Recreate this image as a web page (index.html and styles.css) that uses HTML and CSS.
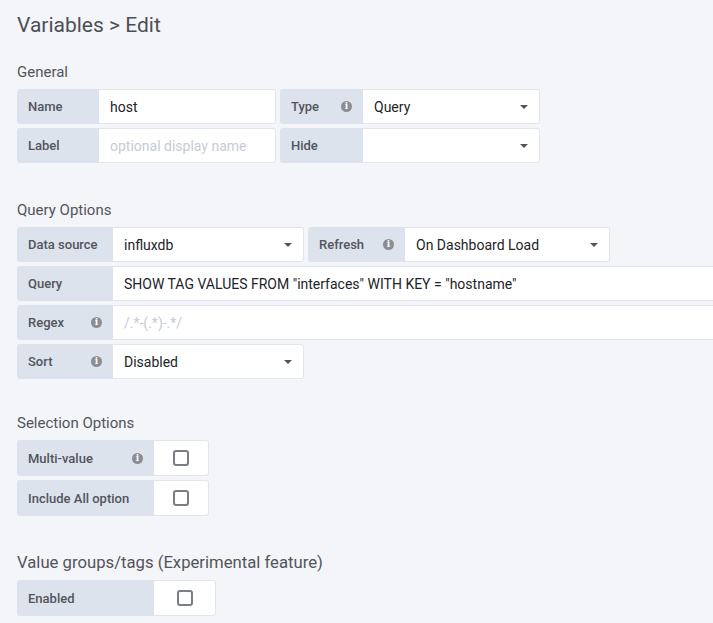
FILE: index.html
```html
<!DOCTYPE html>
<html>
<head>
<meta charset="utf-8">
<link rel="stylesheet" href="styles.css">
</head>
<body>
<div class="page">
  <h1 class="title">Variables &gt; Edit</h1>

  <h3 class="section general">General</h3>
  <div class="row">
    <div class="label w82">Name</div>
    <div class="input w177 ml0">host</div>
    <div class="label w83">Type <span class="info">i</span></div>
    <div class="input select w177">Query <span class="caret"></span></div>
  </div>
  <div class="row">
    <div class="label w82">Label</div>
    <div class="input w177 placeholder">optional display name</div>
    <div class="label w83">Hide</div>
    <div class="input select w177"><span class="caret"></span></div>
  </div>

  <h3 class="section query">Query Options</h3>
  <div class="row">
    <div class="label w96">Data source</div>
    <div class="input select w191">influxdb <span class="caret"></span></div>
    <div class="label w97">Refresh <span class="info">i</span></div>
    <div class="input select w205">On Dashboard Load <span class="caret"></span></div>
  </div>
  <div class="row">
    <div class="label w96">Query</div>
    <div class="input wide">SHOW TAG VALUES FROM "interfaces" WITH KEY = "hostname"</div>
  </div>
  <div class="row">
    <div class="label w96">Regex <span class="info">i</span></div>
    <div class="input wide placeholder">/.*-(.*)-.*/</div>
  </div>
  <div class="row">
    <div class="label w96">Sort <span class="info">i</span></div>
    <div class="input select w191">Disabled <span class="caret"></span></div>
  </div>

  <h3 class="section selection">Selection Options</h3>
  <div class="row tall">
    <div class="label w137">Multi-value <span class="info">i</span></div>
    <div class="check w55"><span class="box"></span></div>
  </div>
  <div class="row tall">
    <div class="label w137">Include All option</div>
    <div class="check w55"><span class="box"></span></div>
  </div>

  <h3 class="section groups">Value groups/tags (Experimental feature)</h3>
  <div class="row tall">
    <div class="label w137">Enabled</div>
    <div class="check w62"><span class="box"></span></div>
  </div>
</div>
</body>
</html>
```

FILE: styles.css
```css
html, body {
  margin: 0;
  padding: 0;
  background: #f4f5f8;
  overflow: hidden;
}
body {
  font-family: Roboto, "Helvetica Neue", Arial, sans-serif;
  color: #52545c;
}
.page {
  padding: 0 0 0 17px;
  width: 696px;
  overflow: hidden;
}
.title {
  margin: 0;
  padding-top: 10px;
  font-size: 21px;
  line-height: 30px;
  font-weight: 400;
  color: #4d4f57;
}
.section {
  margin: 0 0 7px 0;
  font-size: 15px;
  line-height: 20px;
  font-weight: 400;
  color: #52545c;
}
.section.general { margin-top: 22px; }
.section.query { margin-top: 37px; }
.section.selection { margin-top: 34px; }
.section.groups { margin-top: 37px; font-size: 16.7px; }

.row {
  display: flex;
  height: 35px;
  margin-bottom: 4px;
}
.row.tall { height: 36px; }
.label {
  box-sizing: border-box;
  height: 100%;
  background: #dde3ec;
  border-radius: 3px 0 0 3px;
  padding: 0 11px;
  display: flex;
  align-items: center;
  justify-content: space-between;
  font-size: 13px;
  font-weight: 500;
  color: #52545c;
  flex-shrink: 0;
}
.input {
  box-sizing: border-box;
  height: 35px;
  background: #ffffff;
  border: 1px solid #e1e6ee;
  border-left: none;
  border-radius: 0 3px 3px 0;
  padding: 0 11px;
  display: flex;
  align-items: center;
  font-size: 14px;
  color: #222429;
  margin-right: 4px;
  flex-shrink: 0;
  white-space: nowrap;
}
.input.placeholder { color: #c6ccd4; }
.select { justify-content: space-between; padding-right: 11px; }
.caret {
  width: 0;
  height: 0;
  border-left: 4px solid transparent;
  border-right: 4px solid transparent;
  border-top: 4px solid #52545c;
  margin-left: auto;
}
.info {
  display: inline-flex;
  align-items: center;
  justify-content: center;
  width: 11px;
  height: 11px;
  border-radius: 50%;
  background: #8a8d94;
  color: #ffffff;
  font-size: 9px;
  font-weight: 700;
  font-family: "DejaVu Serif", serif;
  line-height: 11px;
}
.check {
  box-sizing: border-box;
  height: 36px;
  background: #ffffff;
  border: 1px solid #e1e6ee;
  border-left: none;
  border-radius: 0 3px 3px 0;
  display: flex;
  align-items: center;
  justify-content: center;
}
.check .box {
  box-sizing: border-box;
  width: 16px;
  height: 16px;
  border: 2px solid #7b7e86;
  border-radius: 3px;
  background: #fff;
}
.w82 { width: 82px; }
.w83 { width: 83px; }
.w96 { width: 96px; }
.w97 { width: 97px; }
.w137 { width: 137px; }
.w177 { width: 177px; }
.w191 { width: 191px; }
.w205 { width: 205px; }
.w55 { width: 55px; }
.w62 { width: 62px; }
.wide { width: 620px; }
```
